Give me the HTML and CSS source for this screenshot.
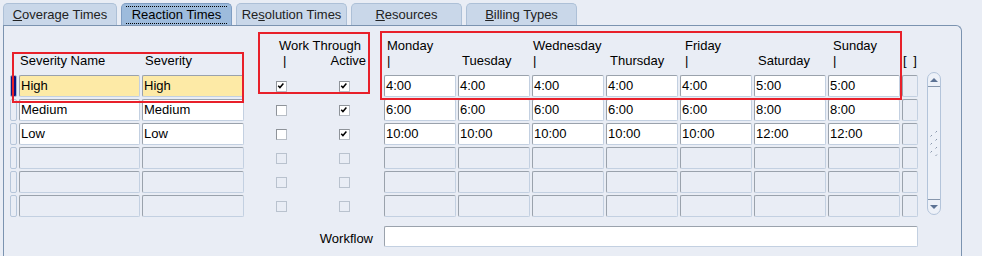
FILE: index.html
```html
<!DOCTYPE html>
<html>
<head>
<meta charset="utf-8">
<link rel="stylesheet" href="styles.css">
</head>
<body>
<div class="screen">
  <div class="tabs">
    <div class="tab first"><span><u>C</u>overage Times</span></div>
    <div class="tab active"><span class="focus">Reaction Times</span></div>
    <div class="tab"><span>Re<u>s</u>olution Times</span></div>
    <div class="tab"><span><u>R</u>esources</span></div>
    <div class="tab"><span><u>B</u>illing Types</span></div>
  </div>
  <div class="panel">
    <div class="grid">
      <!-- header -->
      <div></div>
      <div class="h hname"><div class="l">Severity Name</div></div>
      <div class="h hsev"><div class="l">Severity</div></div>
      <div class="h hchk"><div class="l l1">Work Through</div><div class="l l2"><span>|</span><span>Active</span></div></div>
      <div class="h hd"><div class="l">Monday</div><div class="l">|</div></div>
      <div class="h hd hd2"><div class="l"></div><div class="l">Tuesday</div></div>
      <div class="h hd hw"><div class="l">Wednesday</div><div class="l">|</div></div>
      <div class="h hd hd2"><div class="l"></div><div class="l">Thursday</div></div>
      <div class="h hd hf"><div class="l">Friday</div><div class="l">|</div></div>
      <div class="h hd hd2"><div class="l"></div><div class="l">Saturday</div></div>
      <div class="h hd hf"><div class="l">Sunday</div><div class="l">|</div></div>
      <div class="h hsm"><div class="l">[ ]</div></div>
      <div></div>

      <div class="sb">
        <div class="sb-up"><span class="tri-up"></span></div>
        <svg class="grip" width="12" height="28" viewBox="0 0 12 28">
          <g stroke="#8a98ac" stroke-width="1">
            <line x1="7.5" y1="3.5" x2="9" y2="2"/>
            <line x1="2.5" y1="7.5" x2="4" y2="6"/>
            <line x1="7.5" y1="11.5" x2="9" y2="10"/>
            <line x1="2.5" y1="15.5" x2="4" y2="14"/>
            <line x1="7.5" y1="19.5" x2="9" y2="18"/>
            <line x1="2.5" y1="23.5" x2="4" y2="22"/>
            <line x1="7.5" y1="27" x2="9" y2="25.5"/>
          </g>
        </svg>
        <div class="sb-down"><span class="tri-down"></span></div>
      </div>

      <!-- row 1 -->
      <div class="sel on"></div>
      <div class="f hl">High</div>
      <div class="f hl">High</div>
      <div class="chk">
        <span class="cb"><svg viewBox="0 0 11 11" width="9" height="9"><path d="M1.5 4.5 L3.6 6.8 L7.8 1.8" stroke="#000" stroke-width="1.8" fill="none"/></svg></span>
        <span class="cb"><svg viewBox="0 0 11 11" width="9" height="9"><path d="M1.5 4.5 L3.6 6.8 L7.8 1.8" stroke="#000" stroke-width="1.8" fill="none"/></svg></span>
      </div>
      <div class="f">4:00</div><div class="f">4:00</div><div class="f">4:00</div><div class="f">4:00</div><div class="f">4:00</div><div class="f">5:00</div><div class="f">5:00</div>
      <div class="f off"></div>

      <!-- row 2 -->
      <div class="sel"></div>
      <div class="f">Medium</div>
      <div class="f">Medium</div>
      <div class="chk">
        <span class="cb"></span>
        <span class="cb"><svg viewBox="0 0 11 11" width="9" height="9"><path d="M1.5 4.5 L3.6 6.8 L7.8 1.8" stroke="#000" stroke-width="1.8" fill="none"/></svg></span>
      </div>
      <div class="f">6:00</div><div class="f">6:00</div><div class="f">6:00</div><div class="f">6:00</div><div class="f">6:00</div><div class="f">8:00</div><div class="f">8:00</div>
      <div class="f off"></div>

      <!-- row 3 -->
      <div class="sel"></div>
      <div class="f">Low</div>
      <div class="f">Low</div>
      <div class="chk">
        <span class="cb"></span>
        <span class="cb"><svg viewBox="0 0 11 11" width="9" height="9"><path d="M1.5 4.5 L3.6 6.8 L7.8 1.8" stroke="#000" stroke-width="1.8" fill="none"/></svg></span>
      </div>
      <div class="f">10:00</div><div class="f">10:00</div><div class="f">10:00</div><div class="f">10:00</div><div class="f">10:00</div><div class="f">12:00</div><div class="f">12:00</div>
      <div class="f off"></div>

      <!-- row 4 -->
      <div class="sel"></div>
      <div class="f off"></div>
      <div class="f off"></div>
      <div class="chk"><span class="cb off"></span><span class="cb off"></span></div>
      <div class="f off"></div><div class="f off"></div><div class="f off"></div><div class="f off"></div><div class="f off"></div><div class="f off"></div><div class="f off"></div>
      <div class="f off"></div>

      <!-- row 5 -->
      <div class="sel"></div>
      <div class="f off"></div>
      <div class="f off"></div>
      <div class="chk"><span class="cb off"></span><span class="cb off"></span></div>
      <div class="f off"></div><div class="f off"></div><div class="f off"></div><div class="f off"></div><div class="f off"></div><div class="f off"></div><div class="f off"></div>
      <div class="f off"></div>

      <!-- row 6 -->
      <div class="sel"></div>
      <div class="f off"></div>
      <div class="f off"></div>
      <div class="chk"><span class="cb off"></span><span class="cb off"></span></div>
      <div class="f off"></div><div class="f off"></div><div class="f off"></div><div class="f off"></div><div class="f off"></div><div class="f off"></div><div class="f off"></div>
      <div class="f off"></div>

      <!-- workflow -->
      <div class="wl">Workflow</div>
      <div class="f wf"></div>
    </div>
  </div>

  <div class="mark m1"></div>
  <div class="mark m2"></div>
  <div class="mark m3"></div>
</div>
</body>
</html>
```

FILE: styles.css
```css
body {
  margin: 0;
  background: #e9edf5;
  font-family: "Liberation Sans", Arial, sans-serif;
  font-size: 13px;
  color: #000;
}

.screen {
  position: relative;
  width: 982px;
  height: 256px;
  overflow: hidden;
}

/* tabs */
.tabs {
  display: flex;
  gap: 4px;
  padding: 3px 0 0 3px;
  height: 22px;
}

.tab {
  width: 111px;
  height: 22px;
  box-sizing: border-box;
  border: 1px solid #adc0d7;
  border-bottom: none;
  border-radius: 5px 5px 0 0;
  background: #c9d7e9;
  color: #222;
  display: flex;
  align-items: center;
  justify-content: center;
}

.tab.first {
  width: 114px;
}

.tab.active {
  background: #9dbbdc;
  border-color: #7f9dc2;
  color: #000;
}

.focus {
  width: 101px;
  height: 18px;
  box-sizing: border-box;
  border-top: 1px dotted #000;
  border-bottom: 1px dotted #000;
  display: flex;
  align-items: center;
  justify-content: center;
}

/* panel */
.panel {
  margin-left: 3px;
  width: 959px;
  height: 231px;
  box-sizing: border-box;
  border: 1px solid #7b93b0;
  border-bottom: none;
  border-top-right-radius: 6px;
  padding-left: 6px;
}

.grid {
  display: grid;
  grid-template-columns: 7px 121px 102px 136px repeat(7, 72px) 16px 21px;
  grid-template-rows: 47px repeat(6, 22px) 5px 21px;
  column-gap: 2px;
  row-gap: 2px;
}

/* headers */
.h {
  display: flex;
  flex-direction: column;
  justify-content: flex-end;
  padding-bottom: 5px;
  line-height: 15px;
  white-space: nowrap;
}

.h .l {
  height: 15px;
}

.hname {
  padding-left: 1px;
}

.hsev {
  padding-left: 3px;
}

.hchk .l1 {
  padding-left: 33px;
}

.hchk .l2 {
  display: flex;
  justify-content: space-between;
  padding-left: 37px;
  padding-right: 16px;
}

.hd {
  padding-left: 3px;
}

.hd2 {
  padding-left: 4px;
}

.hw {
  padding-left: 1px;
}

.hf {
  padding-left: 5px;
}

.hsm {
  padding-left: 1px;
  word-spacing: 3px;
}

/* fields */
.f {
  box-sizing: border-box;
  height: 22px;
  border: 1px solid;
  border-color: #9aa2ac #c3d0e1 #c3d0e1 #9aa2ac;
  border-radius: 2px;
  background: #fff;
  padding-left: 1px;
  line-height: 20px;
  white-space: nowrap;
  overflow: hidden;
}

.f.off {
  background: #e9edf5;
}

.f.hl {
  background: #fdeaa6;
}

.sel {
  box-sizing: border-box;
  border: 1px solid #b6c6da;
  border-radius: 2px;
}

.sel.on {
  background: #0a1683;
  border-color: #a7b7cf;
}

/* checkboxes */
.chk {
  display: flex;
  align-items: center;
  padding-left: 30px;
  gap: 52px;
}

.cb {
  width: 11px;
  height: 11px;
  box-sizing: border-box;
  border: 1px solid #8e9399;
  border-right-color: #b8bec6;
  border-bottom-color: #b8bec6;
  background: #fff;
  display: flex;
  align-items: center;
  justify-content: center;
}

.cb.off {
  border-color: #b9c2ce;
  background: #e9edf5;
}

/* scrollbar */
.sb {
  grid-column: 13;
  grid-row: 2 / span 6;
  margin-left: 7px;
  margin-top: -3px;
  width: 14px;
  height: 143px;
  box-sizing: border-box;
  border: 1px solid #b3c4da;
  border-radius: 7px;
  background: #edf1f8;
  display: flex;
  flex-direction: column;
  justify-content: space-between;
  align-items: center;
}

.sb-up {
  width: 100%;
  height: 13px;
  border-bottom: 1px solid #8797ad;
  display: flex;
  align-items: center;
  justify-content: center;
}

.sb-down {
  width: 100%;
  height: 14px;
  border-top: 1px solid #8797ad;
  display: flex;
  align-items: center;
  justify-content: center;
}

.tri-up {
  width: 0;
  height: 0;
  border-left: 4px solid transparent;
  border-right: 4px solid transparent;
  border-bottom: 4px solid #5d7394;
}

.tri-down {
  width: 0;
  height: 0;
  border-left: 4px solid transparent;
  border-right: 4px solid transparent;
  border-top: 4px solid #5d7394;
}

/* workflow */
.wl {
  grid-row: 9;
  grid-column: 1 / 5;
  text-align: right;
  padding-right: 9px;
  padding-top: 2px;
  line-height: 21px;
}

.wf {
  grid-row: 9;
  grid-column: 5 / 13;
  height: 21px;
}

/* red annotation boxes */
.mark {
  position: absolute;
  box-sizing: border-box;
  border: 2px solid #e8202a;
  pointer-events: none;
}

.m1 {
  left: 12px;
  top: 52px;
  width: 232px;
  height: 51px;
}

.m2 {
  left: 258px;
  top: 32px;
  width: 112px;
  height: 62px;
}

.m3 {
  left: 380px;
  top: 31px;
  width: 522px;
  height: 69px;
}
```
